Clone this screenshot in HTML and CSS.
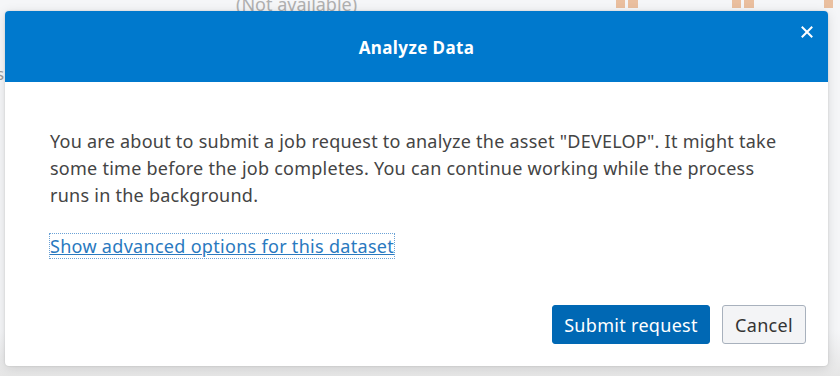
FILE: index.html
```html
<!DOCTYPE html>
<html>
<head>
<meta charset="utf-8">
<link rel="stylesheet" href="styles.css">
</head>
<body>
<div class="page">
  <div class="bg-row">
    <span class="na">(Not available)</span>
    <span class="chip c1"></span>
    <span class="chip c2"></span>
    <span class="chip c3"></span>
  </div>
  <span class="side-s">s</span>
</div>
<div class="modal">
  <div class="modal-header">
    <h2 class="title">Analyze Data</h2>
    <button class="close" aria-label="Close">
      <svg width="12" height="12" viewBox="0 0 12 12"><path d="M1.5 1.5 L10.5 10.5 M10.5 1.5 L1.5 10.5" stroke="#fff" stroke-width="2" stroke-linecap="square"/></svg>
    </button>
  </div>
  <div class="modal-body">
    <p class="msg">You are about to submit a job request to analyze the asset "DEVELOP". It might take some time before the job completes. You can continue working while the process runs in the background.</p>
    <a class="adv" href="#">Show advanced options for this dataset</a>
  </div>
  <div class="modal-footer">
    <button class="btn primary">Submit request</button>
    <button class="btn secondary">Cancel</button>
  </div>
</div>
</body>
</html>
```
FILE: styles.css
```css
html, body {
  margin: 0;
  padding: 0;
}
body {
  width: 840px;
  height: 376px;
  overflow: hidden;
  position: relative;
  background: linear-gradient(#f5f6f8 0, #f5f6f8 330px, #e6e6e6 376px);
  font-family: "Noto Sans", "Liberation Sans", sans-serif;
}
.page {
  position: relative;
  height: 376px;
}
.bg-row {
  display: flex;
  align-items: flex-start;
  height: 12px;
  overflow: hidden;
}
.na {
  margin-left: 236px;
  margin-top: -8px;
  font-size: 18px;
  color: #b0b0b0;
  font-family: "Noto Sans", sans-serif;
}
.chip {
  display: block;
  width: 22px;
  height: 8px;
  background: linear-gradient(90deg, #eabf9f 0 9px, transparent 9px 12px, #eabf9f 12px);
}
.c1 { margin-left: 259px; }
.c2 { margin-left: 94px; }
.c3 { margin-left: 70px; width: 12px; }
.side-s {
  position: absolute;
  left: -4px;
  top: 62px;
  font-size: 17px;
  color: #9a9a9a;
}
.modal {
  position: absolute;
  left: 5px;
  top: 11px;
  width: 823px;
  height: 355px;
  background: #fff;
  border-radius: 4px;
  box-shadow: 0 2px 12px rgba(0,0,0,0.12), 0 0 2px rgba(0,0,0,0.15);
  display: flex;
  flex-direction: column;
  overflow: hidden;
}
.modal-header {
  height: 71px;
  background: #0079cd;
  position: relative;
  display: flex;
  align-items: center;
  justify-content: center;
}
.title {
  margin: 0;
  color: #fff;
  font-size: 17px;
  font-weight: 700;
  letter-spacing: 0.4px;
  padding-top: 2px;
}
.close {
  position: absolute;
  right: 13px;
  top: 13px;
  width: 16px;
  height: 16px;
  padding: 0;
  border: 0;
  background: transparent;
  display: flex;
  align-items: center;
  justify-content: center;
}
.modal-body {
  padding: 46px 45px 0 45px;
  flex: 1;
}
.msg {
  margin: 0 0 27px 0;
  font-size: 18px;
  letter-spacing: 0.25px;
  line-height: 27px;
  color: #444;
}
.adv {
  font-size: 18px;
  letter-spacing: 0.3px;
  line-height: 20px;
  color: #2979c0;
  text-decoration: underline;
  outline: 1px dotted #6aa2d6;
}
.modal-footer {
  display: flex;
  justify-content: flex-end;
  gap: 12px;
  padding: 0 22px 22px 0;
}
.btn {
  height: 39px;
  font-family: "Noto Sans", sans-serif;
  font-size: 18px;
  letter-spacing: 0.3px;
  border-radius: 3px;
  padding: 0 8px;
}
.primary {
  background: #0068b4;
  color: #fff;
  border: 1px solid #0068b4;
  width: 158px;
}
.secondary {
  background: #f3f4f6;
  color: #333;
  border: 1px solid #a8b1bd;
  width: 84px;
}
```
